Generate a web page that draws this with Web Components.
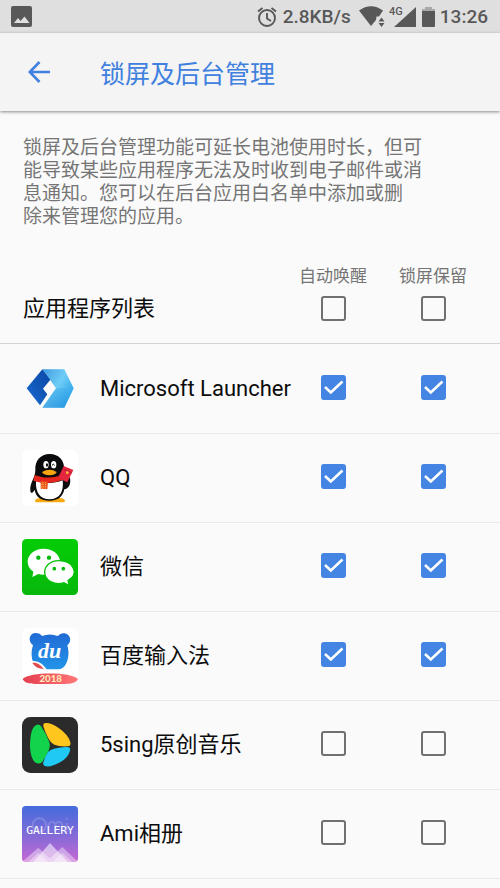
<!DOCTYPE html>
<html lang="zh-CN">
<head>
<meta charset="utf-8">
<meta name="viewport" content="width=device-width, initial-scale=1">
<title>锁屏及后台管理</title>
<style>
  html { background: #fafafa; }
  body { margin: 0; font-family: Roboto, "Noto Sans CJK SC", sans-serif; color: #0c0c0c; }
</style>
</head>
<body>
<status-bar speed="2.8KB/s" network="4G" time="13:26"></status-bar>
<app-header>锁屏及后台管理</app-header>
<main>
  <info-text>锁屏及后台管理功能可延长电池使用时长，但可<br>能导致某些应用程序无法及时收到电子邮件或消<br>息通知。您可以在后台应用白名单中添加或删<br>除来管理您的应用。</info-text>
  <app-table></app-table>
</main>

<script>
class BaseElement extends HTMLElement {
  render(html) {
    const t = document.createElement('template');
    t.innerHTML = html;
    this.attachShadow({ mode: 'open' }).append(t.content.cloneNode(true));
  }
}

customElements.define('status-bar', class extends BaseElement {
  connectedCallback() {
    this.render(`
      <style>
        :host { display: flex; align-items: center; height: 33px; padding: 0 12px 0 11px; background: #dfdfdf; color: #585858; font-size: 19px; font-weight: 500; line-height: 24px; }
        svg { display: block; fill: currentColor; flex: none; }
        .spacer { flex: 1; }
        .speed { margin: 0 8px 0 6px; }
        .wifi { margin-right: 4px; }
        .signal { margin-right: 5px; }
        .battery { margin-right: 5px; }
      </style>
      <svg width="21" height="21" viewBox="0 0 21 21" role="img" aria-label="图片"><path fill-rule="evenodd" d="M2 0h17a2 2 0 0 1 2 2v17a2 2 0 0 1-2 2H2a2 2 0 0 1-2-2V2a2 2 0 0 1 2-2zM3 17h15.500l-5-6.500-4 4.500-2.500-3z"/></svg>
      <span class="spacer"></span>
      <svg width="20" height="20" viewBox="0 0 20 20" role="img" aria-label="闹钟"><g fill="none" stroke="currentColor" stroke-width="1.900"><circle cx="10" cy="11" r="8"/><path d="M10 6v5.500l4 2.500M1 4.500l4.500-3.600M19 4.500L14.500.9"/></g></svg>
      <span class="speed">${this.getAttribute('speed')}</span>
      <svg class="wifi" width="26" height="21" viewBox="0 0 26 21" role="img" aria-label="无线网络"><path d="M0 4.500Q12-4 24 4.500L20 10.500h-2.500L17 14l-5 6z"/><path d="M19.500 15.500l3-4 3 4zM19.500 17h6l-3 4z"/></svg>
      <svg class="signal" width="28" height="23" viewBox="0 0 28 23" role="img" aria-label="移动信号"><path d="M27 2v20H5z"/><text x="0" y="10" font-size="11" font-weight="500">${this.getAttribute('network')}</text></svg>
      <svg class="battery" width="13" height="20" viewBox="0 0 13 20" role="img" aria-label="电池"><path d="M3 0h7v2h3v3H0V2h3z" opacity=".4"/><path d="M0 4h13v15a1 1 0 0 1-1 1H1a1 1 0 0 1-1-1z"/></svg>
      <span>${this.getAttribute('time')}</span>`);
  }
});

customElements.define('app-header', class extends BaseElement {
  connectedCallback() {
    this.render(`
      <style>
        :host { display: flex; align-items: center; height: 78px; padding-left: 22px; background: #f4f4f4; color: #4080df; box-shadow: 0 1px 3px rgba(0,0,0,.45); position: relative; }
        button { display: grid; place-items: center; width: 34px; height: 34px; margin: 0 44px 0 0; padding: 0; border: 0; background: none; color: inherit; }
        h1 { margin: 0; font-family: "Noto Sans CJK SC", sans-serif; font-size: 25px; line-height: 36px; font-weight: 400; }
      </style>
      <button type="button" aria-label="返回"><svg width="22" height="22" viewBox="0 0 22 22" fill="none" stroke="currentColor" stroke-width="2.600"><path d="M22 11H2M11.500 1L1.800 11l9.700 10"/></svg></button>
      <h1><slot></slot></h1>`);
  }
});

customElements.define('info-text', class extends BaseElement {
  connectedCallback() {
    this.render(`
      <style>
        :host { display: block; padding: 25px 23px 0; color: #757575; }
        p { margin: 0; font-size: 19px; line-height: 23px; }
      </style>
      <p><slot></slot></p>`);
  }
});

customElements.define('check-box', class extends BaseElement {
  connectedCallback() {
    this.render(`
      <style>
        :host { display: inline-grid; vertical-align: top; width: 25px; height: 25px; }
        input, svg { grid-area: 1 / 1; }
        input { appearance: none; box-sizing: border-box; width: 25px; height: 25px; margin: 0; border: 2px solid #707070; border-radius: 3px; }
        input:checked { border-color: #4484e2; background: #4484e2; }
        svg { pointer-events: none; visibility: hidden; }
        input:checked + svg { visibility: visible; }
      </style>
      <input type="checkbox" aria-label="${this.getAttribute('label')}" ${this.hasAttribute('checked') ? 'checked' : ''}>
      <svg width="25" height="25" viewBox="0 0 25 25" fill="none" stroke="#fff" stroke-width="2.600"><path d="M4 12l5.800 5.500L21.500 6.500"/></svg>`);
  }
});

const ICONS = {
  launcher: ['36 15 168 168', `
    <defs>
      <linearGradient id="a" x1="0" y1="1" x2="1" y2="0"><stop offset="0" stop-color="#1c6cd4"/><stop offset=".5" stop-color="#1157b8"/><stop offset="1" stop-color="#0b48a8"/></linearGradient>
      <linearGradient id="b" x1="0" y1="0" x2="1" y2=".8"><stop offset="0" stop-color="#3d9ae0"/><stop offset=".5" stop-color="#6fcdf6"/><stop offset="1" stop-color="#1d9be6"/></linearGradient>
      <linearGradient id="c" x1="0" y1="1" x2="1" y2="0"><stop offset="0" stop-color="#1479d0"/><stop offset="1" stop-color="#45b4f0"/></linearGradient>
    </defs>
    <path fill="url(#b)" d="M97 40h66l28 57-28 58H97l41-58-18-26z"/>
    <path fill="url(#c)" d="M138 97h53l-28 58H97z" opacity=".4"/>
    <path fill="url(#a)" d="M97 40l24 31-22 27 13 17-22 33L50 97z"/>`],
  qq: ['36 26 168 168', `
    <rect x="36" y="26" width="168" height="168" rx="18" fill="#fff"/>
    <path fill="#f9a912" d="M75 179c0-7 12-10 24-9h42c14-1 24 3 24 8 0 6-12 5-22 5H97c-12 0-22 1-22-4z"/>
    <path fill="#0b0b0d" d="M119 38c-28 0-44 21-43 46 0 12-2 17-5 25-6 13-12 26-10 40 1 9 8 6 13-4 3 22 19 33 45 33 25 0 40-12 44-34 14-2 20-16 17-34l-17-22c1-31-16-50-44-50z"/>
    <path fill="#fff" d="M78 119c24 8 55 8 80-2 4 34-9 57-39 57-30 0-43-22-41-55z"/>
    <path fill="#e4261d" d="M74 101c28 11 61 10 83-2l4 15c-26 13-61 14-91 4z"/>
    <path fill="#e9501d" d="M92 120l22 2-2 22-20-2z"/><path fill="none" stroke="#ffd45a" stroke-width="2" stroke-dasharray="3 3" d="M98 121v21M106 122v20M93 129h18M93 137h18"/>
    <path fill="#e4263e" d="M161 74l29 12-18 37-28-13z"/><path fill="none" stroke="#9c1b35" stroke-width="2" d="M157 82l29 13"/><circle cx="172" cy="94" r="4" fill="#f8c63c"/>
    <ellipse cx="108" cy="70" rx="8" ry="11" fill="#fff"/><ellipse cx="131" cy="70" rx="8" ry="11" fill="#fff"/>
    <ellipse cx="111" cy="71" rx="3" ry="5"/><path d="M126 72q4-7 8 0" fill="none" stroke="#000" stroke-width="3"/>
    <path fill="#f8a511" d="M96 92q23-14 44 0-2 9-22 10-19-1-22-10z"/>`],
  wechat: ['36 24 168 168', `
    <defs><linearGradient id="a" x2="0" y2="1"><stop stop-color="#04cd06"/><stop offset="1" stop-color="#08b70c"/></linearGradient></defs>
    <rect x="36" y="24" width="168" height="168" rx="14" fill="url(#a)"/>
    <path fill="#fff" d="M101 53c-27 0-48 17-48 39 0 12 7 23 17 30l-3 16 18-9c22 6 66 0 65-37 0-22-22-39-49-39z"/>
    <path fill="#fff" stroke="#06c009" stroke-width="4" d="M147 89c-25 0-43 15-43 35 0 26 32 40 58 31l16 9-4-15c36-22 15-60-27-60z"/>
    <g fill="#06b90a"><circle cx="85" cy="80" r="6.500"/><circle cx="117" cy="80" r="6.500"/><circle cx="133" cy="113" r="5.500"/><circle cx="160" cy="113" r="5.500"/></g>`],
  baidu: ['36 21 168 168', `
    <defs><linearGradient id="a" x2="0" y2="1"><stop stop-color="#216ad5"/><stop offset="1" stop-color="#2294e8"/></linearGradient><linearGradient id="b"><stop stop-color="#e43f50"/><stop offset="1" stop-color="#ff7777"/></linearGradient></defs>
    <path fill="#fff" d="M54 21h132a18 18 0 0 1 18 18v132H36V39a18 18 0 0 1 18-18z"/>
    <path fill="url(#a)" d="M77 36c9 0 15 4 19 9q23-9 48 0c5-6 12-9 19-8 17 1 25 24 9 36 5 18 5 37-3 54q-8 18-25 18H97q-19 0-27-19c-7-17-7-36-1-53-17-13-11-37 8-37z"/>
    <path fill="#fff" d="M64 121c14-4 35 6 47 26l-38-3z"/><path fill="#e34a4e" d="M67 126c13-3 25 6 34 18-16-1-24-5-34-18z"/>
    <path fill="url(#b)" d="M38 174c20-22 144-22 166 0-8 18-40 15-84 15-45 0-74 3-82-15z"/>
    <text x="119" y="111" text-anchor="middle" fill="#fff" font-family="Liberation Serif, serif" font-size="66" font-weight="700" font-style="italic">du</text>
    <text x="122" y="184" text-anchor="middle" fill="#ffebba" font-family="Lato, sans-serif" font-size="29" font-weight="900">2018</text>`],
  sing: ['36 20 168 168', `
    <rect x="36" y="20" width="168" height="168" rx="25" fill="#2b2b2b"/>
    <path fill="#12d44c" d="M81 43q7-2 12 5 17 24 25 48 4 12-3 27-9 19-18 31-7 8-16 5-20-8-21-55 1-55 21-61z"/>
    <path fill="#ffc61d" d="M103 39q16-4 43 14 29 20 35 43 3 13-10 12-23 1-38-5-13-7-20-23-10-21-13-32-1-7 3-9z"/>
    <path fill="#20c8f4" d="M132 115q18-5 39-5 12 0 9 11-5 21-30 35-26 15-43 12-9-2-7-12 5-17 14-31 7-8 18-10z"/>`],
  gallery: ['36 23 168 168', `
    <defs><linearGradient id="a" x2="0" y2="1"><stop stop-color="#456bdc"/><stop offset=".5" stop-color="#7f6bd8"/><stop offset="1" stop-color="#c568d3"/></linearGradient><clipPath id="c"><rect x="36" y="23" width="168" height="168" rx="11"/></clipPath></defs>
    <rect x="36" y="23" width="168" height="168" rx="11" fill="url(#a)"/>
    <g fill="none" stroke="#fff" stroke-width="6" opacity=".16"><circle cx="88" cy="80" r="20"/><path d="M116 102V78q12-15 20 0v24M136 78q12-15 20 0v24M170 73v29M170 59v6"/></g>
    <g fill="#fff" clip-path="url(#c)"><path opacity=".4" d="M36 191l49-43 45 43zM108 191l49-45 47 45z"/><path opacity=".55" d="M70 191l50-57 53 57z"/><path opacity=".35" d="M55 191l30-28 29 28zM128 191l29-28 29 28z"/></g>
    <text x="120" y="108" text-anchor="middle" fill="#fff" font-family="DejaVu Sans Mono, monospace" font-size="34" font-weight="400">GALLERY</text>`]
};

customElements.define('app-icon', class extends BaseElement {
  connectedCallback() {
    const [box, art] = ICONS[this.getAttribute('name')];
    this.render(`
      <style>:host { display: block; width: 56px; height: 56px; } svg { display: block; width: 100%; height: 100%; }</style>
      <svg viewBox="${box}" aria-hidden="true">${art}</svg>`);
  }
});

customElements.define('app-table', class extends BaseElement {
  connectedCallback() {
    const apps = [
      ['launcher', 'Microsoft Launcher', true], ['qq', 'QQ', true], ['wechat', '微信', true],
      ['baidu', '百度输入法', true], ['sing', '5sing原创音乐', false], ['gallery', 'Ami相册', false]
    ];
    const rows = apps.map(([icon, name, on]) => `
      <tr>
        <td class="icon"><app-icon name="${icon}"></app-icon></td>
        <th class="name" scope="row">${name}</th>
        <td class="wake"><check-box label="${name} 自动唤醒" ${on ? 'checked' : ''}></check-box></td>
        <td class="keep"><check-box label="${name} 锁屏保留" ${on ? 'checked' : ''}></check-box></td>
      </tr>`).join('');
    this.render(`
      <style>
        :host { display: block; margin-top: 36px; }
        table { width: 100%; table-layout: fixed; border-collapse: separate; border-spacing: 0; font-size: 22px; line-height: 28px; }
        th, td { box-sizing: border-box; padding: 0; font-weight: 400; text-align: left; vertical-align: middle; border-bottom: 1px solid #e9e9e9; white-space: nowrap; }
        thead th { height: 80px; vertical-align: top; border-color: #d2d2d2; }
        thead .list { padding: 31px 0 0 23px; }
        tbody th, tbody td { height: 89px; }
        .icon { padding-left: 22px; }
        .wake, .keep { text-align: center; }
        .keep { padding: 0 27px 0 20px; }
        .label { display: block; margin-bottom: 8px; font-size: 17px; line-height: 24px; color: #757575; }
        .c1 { width: 100px; } .c3 { width: 80px; } .c4 { width: 127px; }
        tbody tr:first-child > * { height: 90px; }
      </style>
      <table>
        <colgroup><col class="c1"><col><col class="c3"><col class="c4"></colgroup>
        <thead><tr>
          <th class="list" scope="col" colspan="2">应用程序列表</th>
          <th class="wake" scope="col"><span class="label">自动唤醒</span><check-box label="全部 自动唤醒"></check-box></th>
          <th class="keep" scope="col"><span class="label">锁屏保留</span><check-box label="全部 锁屏保留"></check-box></th>
        </tr></thead>
        <tbody>${rows}</tbody>
      </table>`);
  }
});
</script>
</body>
</html>
